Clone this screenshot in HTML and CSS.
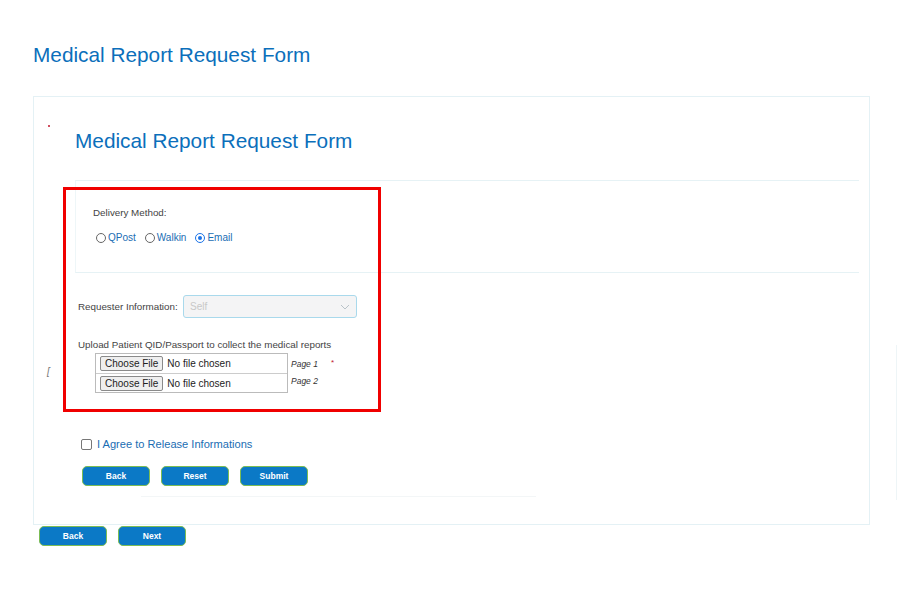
FILE: index.html
```html
<!DOCTYPE html>
<html>
<head>
<meta charset="utf-8">
<link rel="stylesheet" href="styles.css">
</head>
<body>
<div class="page">
  <h1 class="page-title">Medical Report Request Form</h1>
  <div class="row">
    <div class="card">
      <span class="req-dot"></span>
      <h2 class="form-title">Medical Report Request Form</h2>
      <div class="delivery">
        <div class="label">Delivery Method:</div>
        <div class="radios">
          <span class="radio"></span><span class="opt">QPost</span>
          <span class="radio"></span><span class="opt">Walkin</span>
          <span class="radio checked"></span><span class="opt">Email</span>
        </div>
      </div>
      <div class="requester">
        <span class="label">Requester Information:</span>
        <div class="select"><span>Self</span>
          <svg width="10" height="6" viewBox="0 0 10 6"><path d="M1 1 L5 5 L9 1" fill="none" stroke="#b9c3c9" stroke-width="1"/></svg>
        </div>
      </div>
      <div class="upload-wrap">
        <span class="bracket">[</span>
        <div class="upload">
          <div class="label">Upload Patient QID/Passport to collect the medical reports</div>
          <div class="files">
            <div class="file-table">
              <div class="file-row"><span class="choose">Choose File</span><span class="nofile">No file chosen</span></div>
              <div class="file-row"><span class="choose">Choose File</span><span class="nofile">No file chosen</span></div>
            </div>
            <div class="pages">
              <div class="page-lbl">Page 1<span class="star">*</span></div>
              <div class="page-lbl">Page 2</div>
            </div>
          </div>
        </div>
      </div>
      <div class="agree"><span class="check"></span><span class="agree-text">I Agree to Release Informations</span></div>
      <div class="btns">
        <button class="btn">Back</button>
        <button class="btn">Reset</button>
        <button class="btn">Submit</button>
      </div>
      <div class="faint-line"></div>
    </div>
    <div class="side-line"></div>
  </div>
  <div class="btns bottom">
    <button class="btn">Back</button>
    <button class="btn">Next</button>
  </div>
</div>
<div class="annotation"></div>
</body>
</html>
```

FILE: styles.css
```css
html, body {
  margin: 0;
  padding: 0;
  background: #fff;
  font-family: "Liberation Sans", Arial, sans-serif;
}
.page {
  padding-left: 33px;
  padding-top: 43px;
}
.page-title {
  margin: 0;
  font-size: 20.8px;
  line-height: 24px;
  font-weight: normal;
  color: #0b6fbb;
}
.row {
  display: flex;
  align-items: flex-start;
  margin-top: 29px;
}
.card {
  position: relative;
  width: 835px;
  height: 395px;
  border: 1px solid #e4f1f5;
  padding-top: 32px;
  box-sizing: content-box;
}
.req-dot {
  position: absolute;
  left: 14px;
  top: 28px;
  width: 2px;
  height: 2px;
  background: #c0162c;
  border-radius: 1px;
}
.form-title {
  margin: 0 0 0 41px;
  font-size: 20.8px;
  line-height: 24px;
  font-weight: normal;
  color: #0b6fbb;
}
.delivery {
  margin: 27px 0 0 41px;
  width: 784px;
  border-top: 1px solid #e6f2f5;
  border-bottom: 1px solid #e6f2f5;
  border-left: 1px solid #eef6f8;
  padding-left: 17px;
  padding-top: 26px;
  box-sizing: border-box;
  height: 93px;
}
.label {
  font-size: 9.8px;
  color: #444;
  line-height: 12px;
}
.radios {
  display: flex;
  align-items: center;
  margin-top: 13px;
  margin-left: 3px;
  font-size: 10px;
  color: #1a6db3;
}
.radio {
  width: 8px;
  height: 8px;
  border: 1px solid #666;
  border-radius: 50%;
  margin-right: 2px;
  box-sizing: content-box;
  position: relative;
}
.radio.checked {
  border-color: #1a73e8;
}
.radio.checked::after {
  content: "";
  position: absolute;
  left: 2px;
  top: 2px;
  width: 4px;
  height: 4px;
  border-radius: 50%;
  background: #1a73e8;
}
.opt {
  margin-right: 9px;
}
.requester {
  display: flex;
  align-items: center;
  margin: 22px 0 0 44px;
}
.requester .label {
  width: 105px;
}
.select {
  width: 174px;
  height: 23px;
  box-sizing: border-box;
  border: 1px solid #a9d9ec;
  border-radius: 3px;
  background: #f4f4f5;
  display: flex;
  align-items: center;
  justify-content: space-between;
  padding: 0 6px 0 6px;
  font-size: 10px;
  color: #c8c8c8;
}
.upload-wrap {
  display: flex;
  margin-top: 21px;
}
.bracket {
  width: 44px;
  padding-left: 13px;
  box-sizing: border-box;
  font-size: 10px;
  font-style: italic;
  color: #777;
  padding-top: 27px;
}
.upload .label {
  line-height: 12px;
}
.files {
  display: flex;
  margin-top: 2px;
  margin-left: 17px;
}
.file-table {
  width: 193px;
  border: 1px solid #bbb;
  box-sizing: border-box;
}
.file-row {
  height: 19px;
  display: flex;
  align-items: center;
  padding-left: 4px;
  font-size: 10px;
  color: #222;
}
.file-row + .file-row {
  border-top: 1px solid #ccc;
  height: 18px;
}
.choose {
  border: 1px solid #8a8a8a;
  border-radius: 2px;
  background: #efefef;
  padding: 0 4px;
  height: 15px;
  line-height: 14px;
  box-sizing: border-box;
  margin-right: 4px;
}
.pages {
  padding-left: 3px;
}
.page-lbl {
  height: 19px;
  line-height: 19px;
  font-size: 8.5px;
  font-style: italic;
  color: #333;
}
.star {
  color: #c0162c;
  font-style: normal;
  margin-left: 13px;
  font-size: 8px;
  vertical-align: 2px;
}
.agree {
  display: flex;
  align-items: center;
  margin: 45px 0 0 47px;
}
.check {
  width: 9px;
  height: 9px;
  border: 1px solid #777;
  border-radius: 2px;
  margin-right: 5px;
}
.agree-text {
  font-size: 11.1px;
  color: #1a6db3;
}
.btns {
  display: flex;
  gap: 11px;
  margin: 16px 0 0 48px;
}
.btn {
  width: 68px;
  height: 20px;
  padding: 0;
  background: #0b79c6;
  border: 1px solid #7cbc54;
  border-radius: 5px;
  color: #fff;
  font-family: "Liberation Sans", Arial, sans-serif;
  font-weight: bold;
  font-size: 8.5px;
}
.faint-line {
  margin: 10px 0 0 107px;
  width: 395px;
  height: 1px;
  background: #f3f6f7;
}
.side-line {
  width: 1px;
  height: 155px;
  margin-top: 249px;
  margin-left: 26px;
  background: #eef5f7;
}
.btns.bottom {
  margin: 1px 0 0 6px;
}
.annotation {
  position: absolute;
  left: 63px;
  top: 187px;
  width: 312px;
  height: 219px;
  border: 3px solid #f00000;
}
```
